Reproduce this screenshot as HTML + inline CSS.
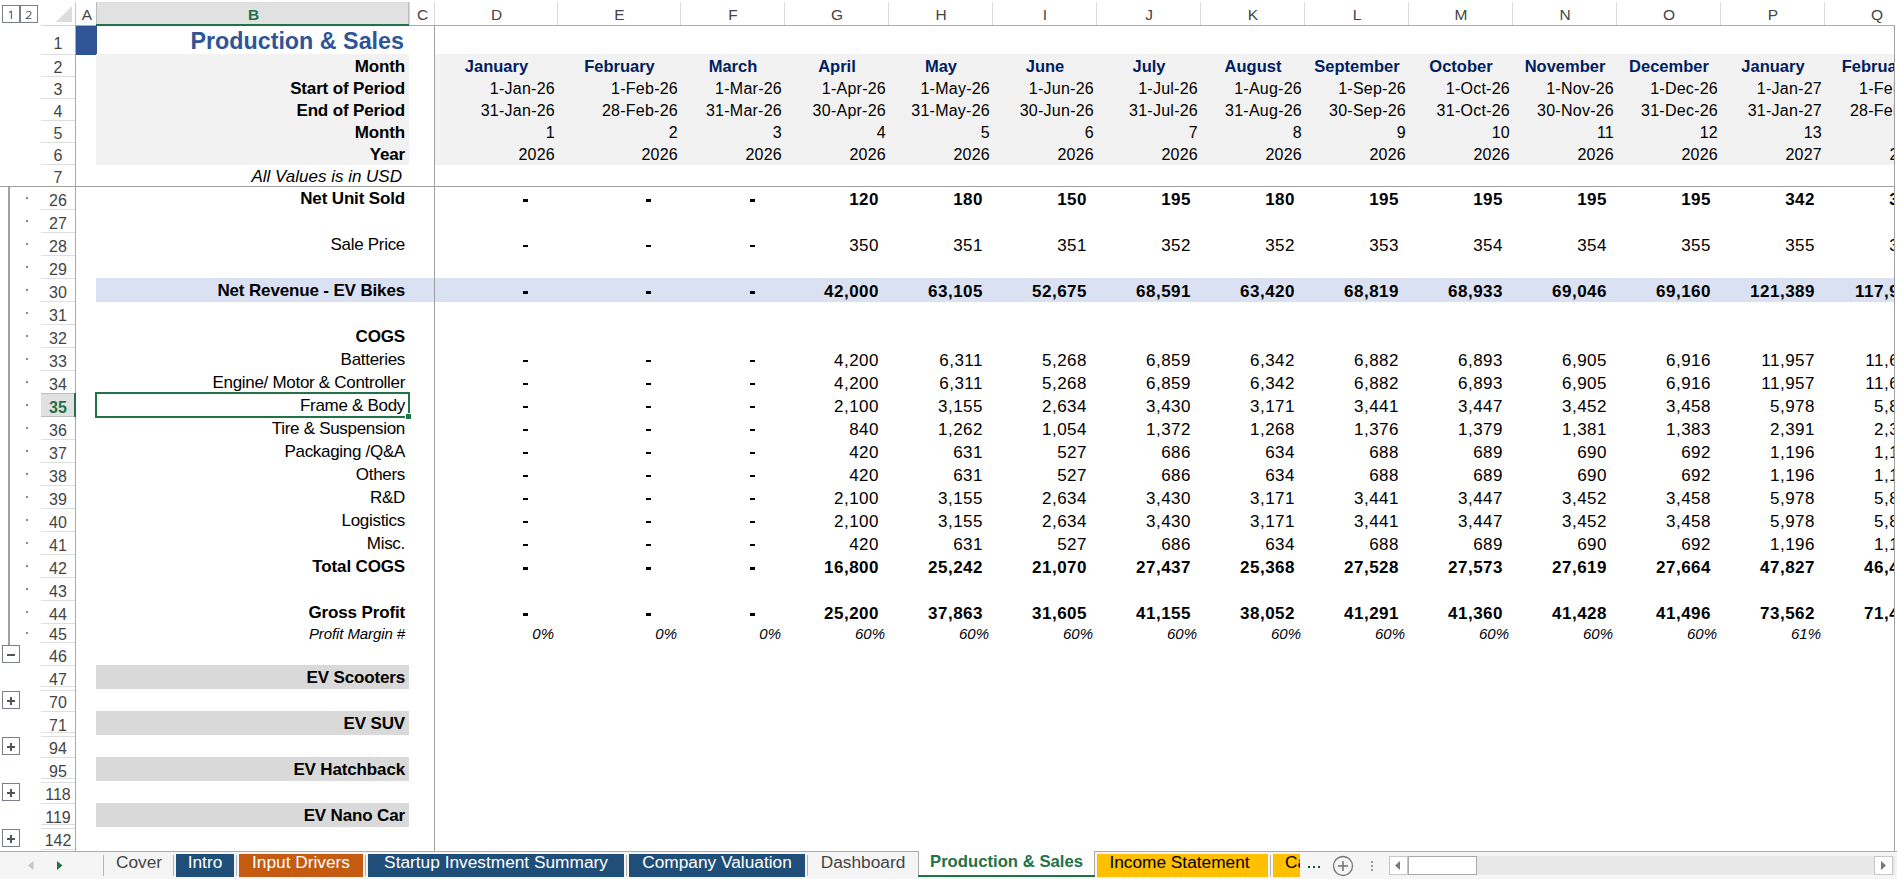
<!DOCTYPE html>
<html><head><meta charset="utf-8"><style>
html,body{margin:0;padding:0;background:#fff;}
body{width:1897px;height:879px;position:relative;overflow:hidden;font-family:"Liberation Sans", sans-serif;}
body div{position:absolute;box-sizing:border-box;}
.t{line-height:30px;height:30px;white-space:nowrap;font-size:17px;color:#000;overflow:visible;}
.b{font-weight:bold;}
.i{font-style:italic;}
.nav{color:#002060;}
.num{letter-spacing:0.5px;}
.lbl{letter-spacing:-0.3px;}
.b.lbl{letter-spacing:-0.15px;}
.fz{font-size:16px;letter-spacing:0.25px;}
.title{font-size:23.3px;font-weight:bold;color:#2f5597;}
.hd{font-size:15.5px;}
.rn{font-size:16px;}
.pm{font-size:15px;font-style:italic;}
.tab{font-size:17.3px;}
.lvl{width:18px;height:18px;border:1px solid #7a7f87;font-size:11px;line-height:16px;text-align:center;color:#444;}
.ob{width:18px;height:18px;border:1px solid #7a7f87;background:#fff;}
</style></head><body>
<div class="lvl" style="left:2px;top:5px;"></div>
<div class="lvl" style="left:20px;top:5px;"></div>
<svg style="position:absolute;left:0;top:0" width="40" height="26"><path d="M9,12.6 L11.4,11.2 L11.4,19" fill="none" stroke="#606060" stroke-width="1.1"/><path d="M26.3,12.6 Q27,11.2 28.7,11.2 Q30.9,11.2 30.9,13.2 Q30.9,14.6 29,16.2 L26.4,18.5 L31.3,18.5" fill="none" stroke="#606060" stroke-width="1.1"/></svg>
<svg style="position:absolute;left:56px;top:6px" width="17" height="17"><polygon points="16,0 16,16 0,16" fill="#dcdcdc"/></svg>
<div style="left:75px;top:2px;width:1px;height:24px;background:#c8c8c8"></div>
<div style="left:96px;top:2px;width:313px;height:23px;background:#e1e1e1;"></div>
<div style="left:96px;top:24px;width:313px;height:2px;background:#217346;"></div>
<div style="left:41px;top:25px;width:34px;height:1px;background:#d4d4d4;"></div>
<div style="left:75px;top:25px;width:21px;height:1px;background:#ababab;"></div>
<div style="left:409px;top:25px;width:1486px;height:1px;background:#ababab;"></div>
<div style="left:409px;top:2px;width:1px;height:23px;background:#dadada;"></div>
<div style="left:434px;top:2px;width:1px;height:23px;background:#dadada;"></div>
<div style="left:557px;top:2px;width:1px;height:23px;background:#dadada;"></div>
<div style="left:680px;top:2px;width:1px;height:23px;background:#dadada;"></div>
<div style="left:784px;top:2px;width:1px;height:23px;background:#dadada;"></div>
<div style="left:888px;top:2px;width:1px;height:23px;background:#dadada;"></div>
<div style="left:992px;top:2px;width:1px;height:23px;background:#dadada;"></div>
<div style="left:1096px;top:2px;width:1px;height:23px;background:#dadada;"></div>
<div style="left:1200px;top:2px;width:1px;height:23px;background:#dadada;"></div>
<div style="left:1304px;top:2px;width:1px;height:23px;background:#dadada;"></div>
<div style="left:1408px;top:2px;width:1px;height:23px;background:#dadada;"></div>
<div style="left:1512px;top:2px;width:1px;height:23px;background:#dadada;"></div>
<div style="left:1616px;top:2px;width:1px;height:23px;background:#dadada;"></div>
<div style="left:1720px;top:2px;width:1px;height:23px;background:#dadada;"></div>
<div style="left:1824px;top:2px;width:1px;height:23px;background:#dadada;"></div>
<div style="left:96px;top:2px;width:1px;height:22px;background:#bdbdbd;"></div>
<div style="left:408px;top:2px;width:1px;height:22px;background:#bdbdbd;"></div>
<div class="t hd" style="left:77px;top:0px;width:20px;text-align:center;color:#444;">A</div>
<div class="t hd" style="left:97px;top:0px;width:313px;text-align:center;color:#217346;font-weight:bold;">B</div>
<div class="t hd" style="left:410px;top:0px;width:25px;text-align:center;color:#444;">C</div>
<div class="t hd" style="left:435px;top:0px;width:123px;text-align:center;color:#444;">D</div>
<div class="t hd" style="left:558px;top:0px;width:123px;text-align:center;color:#444;">E</div>
<div class="t hd" style="left:681px;top:0px;width:104px;text-align:center;color:#444;">F</div>
<div class="t hd" style="left:785px;top:0px;width:104px;text-align:center;color:#444;">G</div>
<div class="t hd" style="left:889px;top:0px;width:104px;text-align:center;color:#444;">H</div>
<div class="t hd" style="left:993px;top:0px;width:104px;text-align:center;color:#444;">I</div>
<div class="t hd" style="left:1097px;top:0px;width:104px;text-align:center;color:#444;">J</div>
<div class="t hd" style="left:1201px;top:0px;width:104px;text-align:center;color:#444;">K</div>
<div class="t hd" style="left:1305px;top:0px;width:104px;text-align:center;color:#444;">L</div>
<div class="t hd" style="left:1409px;top:0px;width:104px;text-align:center;color:#444;">M</div>
<div class="t hd" style="left:1513px;top:0px;width:104px;text-align:center;color:#444;">N</div>
<div class="t hd" style="left:1617px;top:0px;width:104px;text-align:center;color:#444;">O</div>
<div class="t hd" style="left:1721px;top:0px;width:104px;text-align:center;color:#444;">P</div>
<div class="t hd" style="left:1825px;top:0px;width:104px;text-align:center;color:#444;">Q</div>
<div style="left:75px;top:26px;width:1px;height:825px;background:#a8a8a8;"></div>
<div style="left:41px;top:54px;width:34px;height:1px;background:#dedede;"></div>
<div style="left:41px;top:76px;width:34px;height:1px;background:#dedede;"></div>
<div style="left:41px;top:98px;width:34px;height:1px;background:#dedede;"></div>
<div style="left:41px;top:120px;width:34px;height:1px;background:#dedede;"></div>
<div style="left:41px;top:142px;width:34px;height:1px;background:#dedede;"></div>
<div style="left:41px;top:164px;width:34px;height:1px;background:#dedede;"></div>
<div style="left:41px;top:209px;width:34px;height:1px;background:#dedede;"></div>
<div style="left:41px;top:232px;width:34px;height:1px;background:#dedede;"></div>
<div style="left:41px;top:255px;width:34px;height:1px;background:#dedede;"></div>
<div style="left:41px;top:278px;width:34px;height:1px;background:#dedede;"></div>
<div style="left:41px;top:301px;width:34px;height:1px;background:#dedede;"></div>
<div style="left:41px;top:324px;width:34px;height:1px;background:#dedede;"></div>
<div style="left:41px;top:347px;width:34px;height:1px;background:#dedede;"></div>
<div style="left:41px;top:370px;width:34px;height:1px;background:#dedede;"></div>
<div style="left:41px;top:393px;width:34px;height:1px;background:#dedede;"></div>
<div style="left:41px;top:416px;width:34px;height:1px;background:#dedede;"></div>
<div style="left:41px;top:439px;width:34px;height:1px;background:#dedede;"></div>
<div style="left:41px;top:462px;width:34px;height:1px;background:#dedede;"></div>
<div style="left:41px;top:485px;width:34px;height:1px;background:#dedede;"></div>
<div style="left:41px;top:508px;width:34px;height:1px;background:#dedede;"></div>
<div style="left:41px;top:531px;width:34px;height:1px;background:#dedede;"></div>
<div style="left:41px;top:554px;width:34px;height:1px;background:#dedede;"></div>
<div style="left:41px;top:577px;width:34px;height:1px;background:#dedede;"></div>
<div style="left:41px;top:600px;width:34px;height:1px;background:#dedede;"></div>
<div style="left:41px;top:623px;width:34px;height:1px;background:#dedede;"></div>
<div style="left:41px;top:642px;width:34px;height:1px;background:#dedede;"></div>
<div style="left:41px;top:665px;width:34px;height:1px;background:#dedede;"></div>
<div style="left:41px;top:688px;width:34px;height:1px;background:#dedede;"></div>
<div style="left:41px;top:711px;width:34px;height:1px;background:#dedede;"></div>
<div style="left:41px;top:734px;width:34px;height:1px;background:#dedede;"></div>
<div style="left:41px;top:757px;width:34px;height:1px;background:#dedede;"></div>
<div style="left:41px;top:780px;width:34px;height:1px;background:#dedede;"></div>
<div style="left:41px;top:803px;width:34px;height:1px;background:#dedede;"></div>
<div style="left:41px;top:826px;width:34px;height:1px;background:#dedede;"></div>
<div style="left:41px;top:849px;width:34px;height:1px;background:#dedede;"></div>
<div style="left:41px;top:688px;width:34px;height:1px;background:#ffffff;"></div>
<div style="left:41px;top:686px;width:34px;height:1px;background:#dedede;"></div>
<div style="left:41px;top:690px;width:34px;height:1px;background:#dedede;"></div>
<div style="left:41px;top:734px;width:34px;height:1px;background:#ffffff;"></div>
<div style="left:41px;top:732px;width:34px;height:1px;background:#dedede;"></div>
<div style="left:41px;top:736px;width:34px;height:1px;background:#dedede;"></div>
<div style="left:41px;top:780px;width:34px;height:1px;background:#ffffff;"></div>
<div style="left:41px;top:778px;width:34px;height:1px;background:#dedede;"></div>
<div style="left:41px;top:782px;width:34px;height:1px;background:#dedede;"></div>
<div style="left:41px;top:826px;width:34px;height:1px;background:#ffffff;"></div>
<div style="left:41px;top:824px;width:34px;height:1px;background:#dedede;"></div>
<div style="left:41px;top:828px;width:34px;height:1px;background:#dedede;"></div>
<div style="left:41px;top:393px;width:34px;height:24px;background:#e1e1e1;"></div>
<div style="left:41px;top:393px;width:34px;height:1px;background:#bdbdbd;"></div>
<div style="left:41px;top:416px;width:34px;height:1px;background:#bdbdbd;"></div>
<div style="left:74px;top:393px;width:2px;height:24px;background:#217346;"></div>
<div class="t rn" style="left:41px;top:29px;width:34px;text-align:center;color:#444;">1</div>
<div class="t rn" style="left:41px;top:53px;width:34px;text-align:center;color:#444;">2</div>
<div class="t rn" style="left:41px;top:75px;width:34px;text-align:center;color:#444;">3</div>
<div class="t rn" style="left:41px;top:97px;width:34px;text-align:center;color:#444;">4</div>
<div class="t rn" style="left:41px;top:119px;width:34px;text-align:center;color:#444;">5</div>
<div class="t rn" style="left:41px;top:141px;width:34px;text-align:center;color:#444;">6</div>
<div class="t rn" style="left:41px;top:163px;width:34px;text-align:center;color:#444;">7</div>
<div class="t rn" style="left:41px;top:186px;width:34px;text-align:center;color:#444;">26</div>
<div class="t rn" style="left:41px;top:209px;width:34px;text-align:center;color:#444;">27</div>
<div class="t rn" style="left:41px;top:232px;width:34px;text-align:center;color:#444;">28</div>
<div class="t rn" style="left:41px;top:255px;width:34px;text-align:center;color:#444;">29</div>
<div class="t rn" style="left:41px;top:278px;width:34px;text-align:center;color:#444;">30</div>
<div class="t rn" style="left:41px;top:301px;width:34px;text-align:center;color:#444;">31</div>
<div class="t rn" style="left:41px;top:324px;width:34px;text-align:center;color:#444;">32</div>
<div class="t rn" style="left:41px;top:347px;width:34px;text-align:center;color:#444;">33</div>
<div class="t rn" style="left:41px;top:370px;width:34px;text-align:center;color:#444;">34</div>
<div class="t rn" style="left:41px;top:393px;width:34px;text-align:center;color:#217346;font-weight:bold;">35</div>
<div class="t rn" style="left:41px;top:416px;width:34px;text-align:center;color:#444;">36</div>
<div class="t rn" style="left:41px;top:439px;width:34px;text-align:center;color:#444;">37</div>
<div class="t rn" style="left:41px;top:462px;width:34px;text-align:center;color:#444;">38</div>
<div class="t rn" style="left:41px;top:485px;width:34px;text-align:center;color:#444;">39</div>
<div class="t rn" style="left:41px;top:508px;width:34px;text-align:center;color:#444;">40</div>
<div class="t rn" style="left:41px;top:531px;width:34px;text-align:center;color:#444;">41</div>
<div class="t rn" style="left:41px;top:554px;width:34px;text-align:center;color:#444;">42</div>
<div class="t rn" style="left:41px;top:577px;width:34px;text-align:center;color:#444;">43</div>
<div class="t rn" style="left:41px;top:600px;width:34px;text-align:center;color:#444;">44</div>
<div class="t rn" style="left:41px;top:620px;width:34px;text-align:center;color:#444;">45</div>
<div class="t rn" style="left:41px;top:642px;width:34px;text-align:center;color:#444;">46</div>
<div class="t rn" style="left:41px;top:665px;width:34px;text-align:center;color:#444;">47</div>
<div class="t rn" style="left:41px;top:688px;width:34px;text-align:center;color:#444;">70</div>
<div class="t rn" style="left:41px;top:711px;width:34px;text-align:center;color:#444;">71</div>
<div class="t rn" style="left:41px;top:734px;width:34px;text-align:center;color:#444;">94</div>
<div class="t rn" style="left:41px;top:757px;width:34px;text-align:center;color:#444;">95</div>
<div class="t rn" style="left:41px;top:780px;width:34px;text-align:center;color:#444;">118</div>
<div class="t rn" style="left:41px;top:803px;width:34px;text-align:center;color:#444;">119</div>
<div class="t rn" style="left:41px;top:826px;width:34px;text-align:center;color:#444;">142</div>
<div style="left:8px;top:187px;width:2px;height:458px;background:#a0a0a0;"></div>
<div style="left:26px;top:197px;width:2px;height:2px;background:#8a8a8a;"></div>
<div style="left:26px;top:220px;width:2px;height:2px;background:#8a8a8a;"></div>
<div style="left:26px;top:243px;width:2px;height:2px;background:#8a8a8a;"></div>
<div style="left:26px;top:266px;width:2px;height:2px;background:#8a8a8a;"></div>
<div style="left:26px;top:289px;width:2px;height:2px;background:#8a8a8a;"></div>
<div style="left:26px;top:312px;width:2px;height:2px;background:#8a8a8a;"></div>
<div style="left:26px;top:335px;width:2px;height:2px;background:#8a8a8a;"></div>
<div style="left:26px;top:358px;width:2px;height:2px;background:#8a8a8a;"></div>
<div style="left:26px;top:381px;width:2px;height:2px;background:#8a8a8a;"></div>
<div style="left:26px;top:404px;width:2px;height:2px;background:#8a8a8a;"></div>
<div style="left:26px;top:427px;width:2px;height:2px;background:#8a8a8a;"></div>
<div style="left:26px;top:450px;width:2px;height:2px;background:#8a8a8a;"></div>
<div style="left:26px;top:473px;width:2px;height:2px;background:#8a8a8a;"></div>
<div style="left:26px;top:496px;width:2px;height:2px;background:#8a8a8a;"></div>
<div style="left:26px;top:519px;width:2px;height:2px;background:#8a8a8a;"></div>
<div style="left:26px;top:542px;width:2px;height:2px;background:#8a8a8a;"></div>
<div style="left:26px;top:565px;width:2px;height:2px;background:#8a8a8a;"></div>
<div style="left:26px;top:588px;width:2px;height:2px;background:#8a8a8a;"></div>
<div style="left:26px;top:611px;width:2px;height:2px;background:#8a8a8a;"></div>
<div style="left:26px;top:632px;width:2px;height:2px;background:#8a8a8a;"></div>
<div class="ob" style="left:2px;top:645px;"><div style="position:absolute;left:4px;top:8px;width:8px;height:2px;background:#555"></div></div>
<div class="ob" style="left:2px;top:691px;"><div style="position:absolute;left:4px;top:8px;width:8px;height:2px;background:#555"></div><div style="position:absolute;left:7px;top:5px;width:2px;height:8px;background:#555"></div></div>
<div class="ob" style="left:2px;top:737px;"><div style="position:absolute;left:4px;top:8px;width:8px;height:2px;background:#555"></div><div style="position:absolute;left:7px;top:5px;width:2px;height:8px;background:#555"></div></div>
<div class="ob" style="left:2px;top:783px;"><div style="position:absolute;left:4px;top:8px;width:8px;height:2px;background:#555"></div><div style="position:absolute;left:7px;top:5px;width:2px;height:8px;background:#555"></div></div>
<div class="ob" style="left:2px;top:829px;"><div style="position:absolute;left:4px;top:8px;width:8px;height:2px;background:#555"></div><div style="position:absolute;left:7px;top:5px;width:2px;height:8px;background:#555"></div></div>
<div style="left:76px;top:26px;width:21px;height:29px;background:#2f5597;"></div>
<div style="left:96px;top:54px;width:313px;height:111px;background:#f2f2f2;"></div>
<div style="left:435px;top:54px;width:1459px;height:111px;background:#f2f2f2;"></div>
<div class="t title" style="left:96px;top:26px;width:308px;text-align:right;">Production &amp; Sales</div>
<div class="t b lbl" style="left:96px;top:52px;width:309px;text-align:right;">Month</div>
<div class="t b lbl" style="left:96px;top:74px;width:309px;text-align:right;">Start of Period</div>
<div class="t b lbl" style="left:96px;top:96px;width:309px;text-align:right;">End of Period</div>
<div class="t b lbl" style="left:96px;top:118px;width:309px;text-align:right;">Month</div>
<div class="t b lbl" style="left:96px;top:140px;width:309px;text-align:right;">Year</div>
<div class="t i" style="left:96px;top:162px;width:306px;text-align:right;">All Values is in USD</div>
<div style="left:435px;top:0;width:1459px;height:879px;overflow:hidden">
<div class="t b nav" style="left:0px;top:51px;width:123px;text-align:center;font-size:16.5px;">January</div>
<div class="t fz" style="left:-1px;top:74px;width:121px;text-align:right;">1-Jan-26</div>
<div class="t fz" style="left:-1px;top:96px;width:121px;text-align:right;">31-Jan-26</div>
<div class="t fz" style="left:-1px;top:118px;width:121px;text-align:right;">1</div>
<div class="t fz" style="left:-1px;top:140px;width:121px;text-align:right;">2026</div>
<div class="t b nav" style="left:123px;top:51px;width:123px;text-align:center;font-size:16.5px;">February</div>
<div class="t fz" style="left:122px;top:74px;width:121px;text-align:right;">1-Feb-26</div>
<div class="t fz" style="left:122px;top:96px;width:121px;text-align:right;">28-Feb-26</div>
<div class="t fz" style="left:122px;top:118px;width:121px;text-align:right;">2</div>
<div class="t fz" style="left:122px;top:140px;width:121px;text-align:right;">2026</div>
<div class="t b nav" style="left:246px;top:51px;width:104px;text-align:center;font-size:16.5px;">March</div>
<div class="t fz" style="left:245px;top:74px;width:102px;text-align:right;">1-Mar-26</div>
<div class="t fz" style="left:245px;top:96px;width:102px;text-align:right;">31-Mar-26</div>
<div class="t fz" style="left:245px;top:118px;width:102px;text-align:right;">3</div>
<div class="t fz" style="left:245px;top:140px;width:102px;text-align:right;">2026</div>
<div class="t b nav" style="left:350px;top:51px;width:104px;text-align:center;font-size:16.5px;">April</div>
<div class="t fz" style="left:349px;top:74px;width:102px;text-align:right;">1-Apr-26</div>
<div class="t fz" style="left:349px;top:96px;width:102px;text-align:right;">30-Apr-26</div>
<div class="t fz" style="left:349px;top:118px;width:102px;text-align:right;">4</div>
<div class="t fz" style="left:349px;top:140px;width:102px;text-align:right;">2026</div>
<div class="t b nav" style="left:454px;top:51px;width:104px;text-align:center;font-size:16.5px;">May</div>
<div class="t fz" style="left:453px;top:74px;width:102px;text-align:right;">1-May-26</div>
<div class="t fz" style="left:453px;top:96px;width:102px;text-align:right;">31-May-26</div>
<div class="t fz" style="left:453px;top:118px;width:102px;text-align:right;">5</div>
<div class="t fz" style="left:453px;top:140px;width:102px;text-align:right;">2026</div>
<div class="t b nav" style="left:558px;top:51px;width:104px;text-align:center;font-size:16.5px;">June</div>
<div class="t fz" style="left:557px;top:74px;width:102px;text-align:right;">1-Jun-26</div>
<div class="t fz" style="left:557px;top:96px;width:102px;text-align:right;">30-Jun-26</div>
<div class="t fz" style="left:557px;top:118px;width:102px;text-align:right;">6</div>
<div class="t fz" style="left:557px;top:140px;width:102px;text-align:right;">2026</div>
<div class="t b nav" style="left:662px;top:51px;width:104px;text-align:center;font-size:16.5px;">July</div>
<div class="t fz" style="left:661px;top:74px;width:102px;text-align:right;">1-Jul-26</div>
<div class="t fz" style="left:661px;top:96px;width:102px;text-align:right;">31-Jul-26</div>
<div class="t fz" style="left:661px;top:118px;width:102px;text-align:right;">7</div>
<div class="t fz" style="left:661px;top:140px;width:102px;text-align:right;">2026</div>
<div class="t b nav" style="left:766px;top:51px;width:104px;text-align:center;font-size:16.5px;">August</div>
<div class="t fz" style="left:765px;top:74px;width:102px;text-align:right;">1-Aug-26</div>
<div class="t fz" style="left:765px;top:96px;width:102px;text-align:right;">31-Aug-26</div>
<div class="t fz" style="left:765px;top:118px;width:102px;text-align:right;">8</div>
<div class="t fz" style="left:765px;top:140px;width:102px;text-align:right;">2026</div>
<div class="t b nav" style="left:870px;top:51px;width:104px;text-align:center;font-size:16.5px;">September</div>
<div class="t fz" style="left:869px;top:74px;width:102px;text-align:right;">1-Sep-26</div>
<div class="t fz" style="left:869px;top:96px;width:102px;text-align:right;">30-Sep-26</div>
<div class="t fz" style="left:869px;top:118px;width:102px;text-align:right;">9</div>
<div class="t fz" style="left:869px;top:140px;width:102px;text-align:right;">2026</div>
<div class="t b nav" style="left:974px;top:51px;width:104px;text-align:center;font-size:16.5px;">October</div>
<div class="t fz" style="left:973px;top:74px;width:102px;text-align:right;">1-Oct-26</div>
<div class="t fz" style="left:973px;top:96px;width:102px;text-align:right;">31-Oct-26</div>
<div class="t fz" style="left:973px;top:118px;width:102px;text-align:right;">10</div>
<div class="t fz" style="left:973px;top:140px;width:102px;text-align:right;">2026</div>
<div class="t b nav" style="left:1078px;top:51px;width:104px;text-align:center;font-size:16.5px;">November</div>
<div class="t fz" style="left:1077px;top:74px;width:102px;text-align:right;">1-Nov-26</div>
<div class="t fz" style="left:1077px;top:96px;width:102px;text-align:right;">30-Nov-26</div>
<div class="t fz" style="left:1077px;top:118px;width:102px;text-align:right;">11</div>
<div class="t fz" style="left:1077px;top:140px;width:102px;text-align:right;">2026</div>
<div class="t b nav" style="left:1182px;top:51px;width:104px;text-align:center;font-size:16.5px;">December</div>
<div class="t fz" style="left:1181px;top:74px;width:102px;text-align:right;">1-Dec-26</div>
<div class="t fz" style="left:1181px;top:96px;width:102px;text-align:right;">31-Dec-26</div>
<div class="t fz" style="left:1181px;top:118px;width:102px;text-align:right;">12</div>
<div class="t fz" style="left:1181px;top:140px;width:102px;text-align:right;">2026</div>
<div class="t b nav" style="left:1286px;top:51px;width:104px;text-align:center;font-size:16.5px;">January</div>
<div class="t fz" style="left:1285px;top:74px;width:102px;text-align:right;">1-Jan-27</div>
<div class="t fz" style="left:1285px;top:96px;width:102px;text-align:right;">31-Jan-27</div>
<div class="t fz" style="left:1285px;top:118px;width:102px;text-align:right;">13</div>
<div class="t fz" style="left:1285px;top:140px;width:102px;text-align:right;">2027</div>
<div class="t b nav" style="left:1390px;top:51px;width:104px;text-align:center;font-size:16.5px;">February</div>
<div class="t fz" style="left:1389px;top:74px;width:102px;text-align:right;">1-Feb-27</div>
<div class="t fz" style="left:1389px;top:96px;width:102px;text-align:right;">28-Feb-27</div>
<div class="t fz" style="left:1389px;top:118px;width:102px;text-align:right;">14</div>
<div class="t fz" style="left:1389px;top:140px;width:102px;text-align:right;">2027</div>
</div>
<div style="left:96px;top:278px;width:1798px;height:24px;background:#d9e1f2;"></div>
<div style="left:96px;top:665px;width:313px;height:24px;background:#d9d9d9;"></div>
<div style="left:96px;top:711px;width:313px;height:24px;background:#d9d9d9;"></div>
<div style="left:96px;top:757px;width:313px;height:24px;background:#d9d9d9;"></div>
<div style="left:96px;top:803px;width:313px;height:24px;background:#d9d9d9;"></div>
<div class="t b lbl" style="left:96px;top:184px;width:309px;text-align:right;">Net Unit Sold</div>
<div class="t  lbl" style="left:96px;top:230px;width:309px;text-align:right;">Sale Price</div>
<div class="t b lbl" style="left:96px;top:276px;width:309px;text-align:right;">Net Revenue - EV Bikes</div>
<div class="t b lbl" style="left:96px;top:322px;width:309px;text-align:right;">COGS</div>
<div class="t  lbl" style="left:96px;top:345px;width:309px;text-align:right;">Batteries</div>
<div class="t  lbl" style="left:96px;top:368px;width:309px;text-align:right;">Engine/ Motor &amp; Controller</div>
<div class="t  lbl" style="left:96px;top:391px;width:309px;text-align:right;">Frame &amp; Body</div>
<div class="t  lbl" style="left:96px;top:414px;width:309px;text-align:right;">Tire &amp; Suspension</div>
<div class="t  lbl" style="left:96px;top:437px;width:309px;text-align:right;">Packaging /Q&amp;A</div>
<div class="t  lbl" style="left:96px;top:460px;width:309px;text-align:right;">Others</div>
<div class="t  lbl" style="left:96px;top:483px;width:309px;text-align:right;">R&amp;D</div>
<div class="t  lbl" style="left:96px;top:506px;width:309px;text-align:right;">Logistics</div>
<div class="t  lbl" style="left:96px;top:529px;width:309px;text-align:right;">Misc.</div>
<div class="t b lbl" style="left:96px;top:552px;width:309px;text-align:right;">Total COGS</div>
<div class="t b lbl" style="left:96px;top:598px;width:309px;text-align:right;">Gross Profit</div>
<div class="t b lbl" style="left:96px;top:663px;width:309px;text-align:right;">EV Scooters</div>
<div class="t b lbl" style="left:96px;top:709px;width:309px;text-align:right;">EV SUV</div>
<div class="t b lbl" style="left:96px;top:755px;width:309px;text-align:right;">EV Hatchback</div>
<div class="t b lbl" style="left:96px;top:801px;width:309px;text-align:right;">EV Nano Car</div>
<div class="t pm" style="left:96px;top:619px;width:309px;text-align:right;letter-spacing:-0.1px;">Profit Margin #</div>
<div style="left:435px;top:0;width:1459px;height:879px;overflow:hidden">
<div style="left:88px;top:199px;width:5px;height:3px;background:#000;"></div>
<div style="left:211px;top:199px;width:5px;height:3px;background:#000;"></div>
<div style="left:315px;top:199px;width:5px;height:3px;background:#000;"></div>
<div class="t b num" style="left:349px;top:185px;width:95px;text-align:right;">120</div>
<div class="t b num" style="left:453px;top:185px;width:95px;text-align:right;">180</div>
<div class="t b num" style="left:557px;top:185px;width:95px;text-align:right;">150</div>
<div class="t b num" style="left:661px;top:185px;width:95px;text-align:right;">195</div>
<div class="t b num" style="left:765px;top:185px;width:95px;text-align:right;">180</div>
<div class="t b num" style="left:869px;top:185px;width:95px;text-align:right;">195</div>
<div class="t b num" style="left:973px;top:185px;width:95px;text-align:right;">195</div>
<div class="t b num" style="left:1077px;top:185px;width:95px;text-align:right;">195</div>
<div class="t b num" style="left:1181px;top:185px;width:95px;text-align:right;">195</div>
<div class="t b num" style="left:1285px;top:185px;width:95px;text-align:right;">342</div>
<div class="t b num" style="left:1389px;top:185px;width:95px;text-align:right;">348</div>
<div style="left:88px;top:245px;width:5px;height:2px;background:#000;"></div>
<div style="left:211px;top:245px;width:5px;height:2px;background:#000;"></div>
<div style="left:315px;top:245px;width:5px;height:2px;background:#000;"></div>
<div class="t  num" style="left:349px;top:231px;width:95px;text-align:right;">350</div>
<div class="t  num" style="left:453px;top:231px;width:95px;text-align:right;">351</div>
<div class="t  num" style="left:557px;top:231px;width:95px;text-align:right;">351</div>
<div class="t  num" style="left:661px;top:231px;width:95px;text-align:right;">352</div>
<div class="t  num" style="left:765px;top:231px;width:95px;text-align:right;">352</div>
<div class="t  num" style="left:869px;top:231px;width:95px;text-align:right;">353</div>
<div class="t  num" style="left:973px;top:231px;width:95px;text-align:right;">354</div>
<div class="t  num" style="left:1077px;top:231px;width:95px;text-align:right;">354</div>
<div class="t  num" style="left:1181px;top:231px;width:95px;text-align:right;">355</div>
<div class="t  num" style="left:1285px;top:231px;width:95px;text-align:right;">355</div>
<div class="t  num" style="left:1389px;top:231px;width:95px;text-align:right;">356</div>
<div style="left:88px;top:291px;width:5px;height:3px;background:#000;"></div>
<div style="left:211px;top:291px;width:5px;height:3px;background:#000;"></div>
<div style="left:315px;top:291px;width:5px;height:3px;background:#000;"></div>
<div class="t b num" style="left:349px;top:277px;width:95px;text-align:right;">42,000</div>
<div class="t b num" style="left:453px;top:277px;width:95px;text-align:right;">63,105</div>
<div class="t b num" style="left:557px;top:277px;width:95px;text-align:right;">52,675</div>
<div class="t b num" style="left:661px;top:277px;width:95px;text-align:right;">68,591</div>
<div class="t b num" style="left:765px;top:277px;width:95px;text-align:right;">63,420</div>
<div class="t b num" style="left:869px;top:277px;width:95px;text-align:right;">68,819</div>
<div class="t b num" style="left:973px;top:277px;width:95px;text-align:right;">68,933</div>
<div class="t b num" style="left:1077px;top:277px;width:95px;text-align:right;">69,046</div>
<div class="t b num" style="left:1181px;top:277px;width:95px;text-align:right;">69,160</div>
<div class="t b num" style="left:1285px;top:277px;width:95px;text-align:right;">121,389</div>
<div class="t b num" style="left:1389px;top:277px;width:95px;text-align:right;">117,988</div>
<div style="left:88px;top:360px;width:5px;height:2px;background:#000;"></div>
<div style="left:211px;top:360px;width:5px;height:2px;background:#000;"></div>
<div style="left:315px;top:360px;width:5px;height:2px;background:#000;"></div>
<div class="t  num" style="left:349px;top:346px;width:95px;text-align:right;">4,200</div>
<div class="t  num" style="left:453px;top:346px;width:95px;text-align:right;">6,311</div>
<div class="t  num" style="left:557px;top:346px;width:95px;text-align:right;">5,268</div>
<div class="t  num" style="left:661px;top:346px;width:95px;text-align:right;">6,859</div>
<div class="t  num" style="left:765px;top:346px;width:95px;text-align:right;">6,342</div>
<div class="t  num" style="left:869px;top:346px;width:95px;text-align:right;">6,882</div>
<div class="t  num" style="left:973px;top:346px;width:95px;text-align:right;">6,893</div>
<div class="t  num" style="left:1077px;top:346px;width:95px;text-align:right;">6,905</div>
<div class="t  num" style="left:1181px;top:346px;width:95px;text-align:right;">6,916</div>
<div class="t  num" style="left:1285px;top:346px;width:95px;text-align:right;">11,957</div>
<div class="t  num" style="left:1389px;top:346px;width:95px;text-align:right;">11,640</div>
<div style="left:88px;top:383px;width:5px;height:2px;background:#000;"></div>
<div style="left:211px;top:383px;width:5px;height:2px;background:#000;"></div>
<div style="left:315px;top:383px;width:5px;height:2px;background:#000;"></div>
<div class="t  num" style="left:349px;top:369px;width:95px;text-align:right;">4,200</div>
<div class="t  num" style="left:453px;top:369px;width:95px;text-align:right;">6,311</div>
<div class="t  num" style="left:557px;top:369px;width:95px;text-align:right;">5,268</div>
<div class="t  num" style="left:661px;top:369px;width:95px;text-align:right;">6,859</div>
<div class="t  num" style="left:765px;top:369px;width:95px;text-align:right;">6,342</div>
<div class="t  num" style="left:869px;top:369px;width:95px;text-align:right;">6,882</div>
<div class="t  num" style="left:973px;top:369px;width:95px;text-align:right;">6,893</div>
<div class="t  num" style="left:1077px;top:369px;width:95px;text-align:right;">6,905</div>
<div class="t  num" style="left:1181px;top:369px;width:95px;text-align:right;">6,916</div>
<div class="t  num" style="left:1285px;top:369px;width:95px;text-align:right;">11,957</div>
<div class="t  num" style="left:1389px;top:369px;width:95px;text-align:right;">11,640</div>
<div style="left:88px;top:406px;width:5px;height:2px;background:#000;"></div>
<div style="left:211px;top:406px;width:5px;height:2px;background:#000;"></div>
<div style="left:315px;top:406px;width:5px;height:2px;background:#000;"></div>
<div class="t  num" style="left:349px;top:392px;width:95px;text-align:right;">2,100</div>
<div class="t  num" style="left:453px;top:392px;width:95px;text-align:right;">3,155</div>
<div class="t  num" style="left:557px;top:392px;width:95px;text-align:right;">2,634</div>
<div class="t  num" style="left:661px;top:392px;width:95px;text-align:right;">3,430</div>
<div class="t  num" style="left:765px;top:392px;width:95px;text-align:right;">3,171</div>
<div class="t  num" style="left:869px;top:392px;width:95px;text-align:right;">3,441</div>
<div class="t  num" style="left:973px;top:392px;width:95px;text-align:right;">3,447</div>
<div class="t  num" style="left:1077px;top:392px;width:95px;text-align:right;">3,452</div>
<div class="t  num" style="left:1181px;top:392px;width:95px;text-align:right;">3,458</div>
<div class="t  num" style="left:1285px;top:392px;width:95px;text-align:right;">5,978</div>
<div class="t  num" style="left:1389px;top:392px;width:95px;text-align:right;">5,820</div>
<div style="left:88px;top:429px;width:5px;height:2px;background:#000;"></div>
<div style="left:211px;top:429px;width:5px;height:2px;background:#000;"></div>
<div style="left:315px;top:429px;width:5px;height:2px;background:#000;"></div>
<div class="t  num" style="left:349px;top:415px;width:95px;text-align:right;">840</div>
<div class="t  num" style="left:453px;top:415px;width:95px;text-align:right;">1,262</div>
<div class="t  num" style="left:557px;top:415px;width:95px;text-align:right;">1,054</div>
<div class="t  num" style="left:661px;top:415px;width:95px;text-align:right;">1,372</div>
<div class="t  num" style="left:765px;top:415px;width:95px;text-align:right;">1,268</div>
<div class="t  num" style="left:869px;top:415px;width:95px;text-align:right;">1,376</div>
<div class="t  num" style="left:973px;top:415px;width:95px;text-align:right;">1,379</div>
<div class="t  num" style="left:1077px;top:415px;width:95px;text-align:right;">1,381</div>
<div class="t  num" style="left:1181px;top:415px;width:95px;text-align:right;">1,383</div>
<div class="t  num" style="left:1285px;top:415px;width:95px;text-align:right;">2,391</div>
<div class="t  num" style="left:1389px;top:415px;width:95px;text-align:right;">2,328</div>
<div style="left:88px;top:452px;width:5px;height:2px;background:#000;"></div>
<div style="left:211px;top:452px;width:5px;height:2px;background:#000;"></div>
<div style="left:315px;top:452px;width:5px;height:2px;background:#000;"></div>
<div class="t  num" style="left:349px;top:438px;width:95px;text-align:right;">420</div>
<div class="t  num" style="left:453px;top:438px;width:95px;text-align:right;">631</div>
<div class="t  num" style="left:557px;top:438px;width:95px;text-align:right;">527</div>
<div class="t  num" style="left:661px;top:438px;width:95px;text-align:right;">686</div>
<div class="t  num" style="left:765px;top:438px;width:95px;text-align:right;">634</div>
<div class="t  num" style="left:869px;top:438px;width:95px;text-align:right;">688</div>
<div class="t  num" style="left:973px;top:438px;width:95px;text-align:right;">689</div>
<div class="t  num" style="left:1077px;top:438px;width:95px;text-align:right;">690</div>
<div class="t  num" style="left:1181px;top:438px;width:95px;text-align:right;">692</div>
<div class="t  num" style="left:1285px;top:438px;width:95px;text-align:right;">1,196</div>
<div class="t  num" style="left:1389px;top:438px;width:95px;text-align:right;">1,164</div>
<div style="left:88px;top:475px;width:5px;height:2px;background:#000;"></div>
<div style="left:211px;top:475px;width:5px;height:2px;background:#000;"></div>
<div style="left:315px;top:475px;width:5px;height:2px;background:#000;"></div>
<div class="t  num" style="left:349px;top:461px;width:95px;text-align:right;">420</div>
<div class="t  num" style="left:453px;top:461px;width:95px;text-align:right;">631</div>
<div class="t  num" style="left:557px;top:461px;width:95px;text-align:right;">527</div>
<div class="t  num" style="left:661px;top:461px;width:95px;text-align:right;">686</div>
<div class="t  num" style="left:765px;top:461px;width:95px;text-align:right;">634</div>
<div class="t  num" style="left:869px;top:461px;width:95px;text-align:right;">688</div>
<div class="t  num" style="left:973px;top:461px;width:95px;text-align:right;">689</div>
<div class="t  num" style="left:1077px;top:461px;width:95px;text-align:right;">690</div>
<div class="t  num" style="left:1181px;top:461px;width:95px;text-align:right;">692</div>
<div class="t  num" style="left:1285px;top:461px;width:95px;text-align:right;">1,196</div>
<div class="t  num" style="left:1389px;top:461px;width:95px;text-align:right;">1,164</div>
<div style="left:88px;top:498px;width:5px;height:2px;background:#000;"></div>
<div style="left:211px;top:498px;width:5px;height:2px;background:#000;"></div>
<div style="left:315px;top:498px;width:5px;height:2px;background:#000;"></div>
<div class="t  num" style="left:349px;top:484px;width:95px;text-align:right;">2,100</div>
<div class="t  num" style="left:453px;top:484px;width:95px;text-align:right;">3,155</div>
<div class="t  num" style="left:557px;top:484px;width:95px;text-align:right;">2,634</div>
<div class="t  num" style="left:661px;top:484px;width:95px;text-align:right;">3,430</div>
<div class="t  num" style="left:765px;top:484px;width:95px;text-align:right;">3,171</div>
<div class="t  num" style="left:869px;top:484px;width:95px;text-align:right;">3,441</div>
<div class="t  num" style="left:973px;top:484px;width:95px;text-align:right;">3,447</div>
<div class="t  num" style="left:1077px;top:484px;width:95px;text-align:right;">3,452</div>
<div class="t  num" style="left:1181px;top:484px;width:95px;text-align:right;">3,458</div>
<div class="t  num" style="left:1285px;top:484px;width:95px;text-align:right;">5,978</div>
<div class="t  num" style="left:1389px;top:484px;width:95px;text-align:right;">5,820</div>
<div style="left:88px;top:521px;width:5px;height:2px;background:#000;"></div>
<div style="left:211px;top:521px;width:5px;height:2px;background:#000;"></div>
<div style="left:315px;top:521px;width:5px;height:2px;background:#000;"></div>
<div class="t  num" style="left:349px;top:507px;width:95px;text-align:right;">2,100</div>
<div class="t  num" style="left:453px;top:507px;width:95px;text-align:right;">3,155</div>
<div class="t  num" style="left:557px;top:507px;width:95px;text-align:right;">2,634</div>
<div class="t  num" style="left:661px;top:507px;width:95px;text-align:right;">3,430</div>
<div class="t  num" style="left:765px;top:507px;width:95px;text-align:right;">3,171</div>
<div class="t  num" style="left:869px;top:507px;width:95px;text-align:right;">3,441</div>
<div class="t  num" style="left:973px;top:507px;width:95px;text-align:right;">3,447</div>
<div class="t  num" style="left:1077px;top:507px;width:95px;text-align:right;">3,452</div>
<div class="t  num" style="left:1181px;top:507px;width:95px;text-align:right;">3,458</div>
<div class="t  num" style="left:1285px;top:507px;width:95px;text-align:right;">5,978</div>
<div class="t  num" style="left:1389px;top:507px;width:95px;text-align:right;">5,820</div>
<div style="left:88px;top:544px;width:5px;height:2px;background:#000;"></div>
<div style="left:211px;top:544px;width:5px;height:2px;background:#000;"></div>
<div style="left:315px;top:544px;width:5px;height:2px;background:#000;"></div>
<div class="t  num" style="left:349px;top:530px;width:95px;text-align:right;">420</div>
<div class="t  num" style="left:453px;top:530px;width:95px;text-align:right;">631</div>
<div class="t  num" style="left:557px;top:530px;width:95px;text-align:right;">527</div>
<div class="t  num" style="left:661px;top:530px;width:95px;text-align:right;">686</div>
<div class="t  num" style="left:765px;top:530px;width:95px;text-align:right;">634</div>
<div class="t  num" style="left:869px;top:530px;width:95px;text-align:right;">688</div>
<div class="t  num" style="left:973px;top:530px;width:95px;text-align:right;">689</div>
<div class="t  num" style="left:1077px;top:530px;width:95px;text-align:right;">690</div>
<div class="t  num" style="left:1181px;top:530px;width:95px;text-align:right;">692</div>
<div class="t  num" style="left:1285px;top:530px;width:95px;text-align:right;">1,196</div>
<div class="t  num" style="left:1389px;top:530px;width:95px;text-align:right;">1,164</div>
<div style="left:88px;top:567px;width:5px;height:3px;background:#000;"></div>
<div style="left:211px;top:567px;width:5px;height:3px;background:#000;"></div>
<div style="left:315px;top:567px;width:5px;height:3px;background:#000;"></div>
<div class="t b num" style="left:349px;top:553px;width:95px;text-align:right;">16,800</div>
<div class="t b num" style="left:453px;top:553px;width:95px;text-align:right;">25,242</div>
<div class="t b num" style="left:557px;top:553px;width:95px;text-align:right;">21,070</div>
<div class="t b num" style="left:661px;top:553px;width:95px;text-align:right;">27,437</div>
<div class="t b num" style="left:765px;top:553px;width:95px;text-align:right;">25,368</div>
<div class="t b num" style="left:869px;top:553px;width:95px;text-align:right;">27,528</div>
<div class="t b num" style="left:973px;top:553px;width:95px;text-align:right;">27,573</div>
<div class="t b num" style="left:1077px;top:553px;width:95px;text-align:right;">27,619</div>
<div class="t b num" style="left:1181px;top:553px;width:95px;text-align:right;">27,664</div>
<div class="t b num" style="left:1285px;top:553px;width:95px;text-align:right;">47,827</div>
<div class="t b num" style="left:1389px;top:553px;width:95px;text-align:right;">46,412</div>
<div style="left:88px;top:613px;width:5px;height:3px;background:#000;"></div>
<div style="left:211px;top:613px;width:5px;height:3px;background:#000;"></div>
<div style="left:315px;top:613px;width:5px;height:3px;background:#000;"></div>
<div class="t b num" style="left:349px;top:599px;width:95px;text-align:right;">25,200</div>
<div class="t b num" style="left:453px;top:599px;width:95px;text-align:right;">37,863</div>
<div class="t b num" style="left:557px;top:599px;width:95px;text-align:right;">31,605</div>
<div class="t b num" style="left:661px;top:599px;width:95px;text-align:right;">41,155</div>
<div class="t b num" style="left:765px;top:599px;width:95px;text-align:right;">38,052</div>
<div class="t b num" style="left:869px;top:599px;width:95px;text-align:right;">41,291</div>
<div class="t b num" style="left:973px;top:599px;width:95px;text-align:right;">41,360</div>
<div class="t b num" style="left:1077px;top:599px;width:95px;text-align:right;">41,428</div>
<div class="t b num" style="left:1181px;top:599px;width:95px;text-align:right;">41,496</div>
<div class="t b num" style="left:1285px;top:599px;width:95px;text-align:right;">73,562</div>
<div class="t b num" style="left:1389px;top:599px;width:95px;text-align:right;">71,428</div>
<div class="t pm" style="left:-1px;top:619px;width:120px;text-align:right;">0%</div>
<div class="t pm" style="left:122px;top:619px;width:120px;text-align:right;">0%</div>
<div class="t pm" style="left:245px;top:619px;width:101px;text-align:right;">0%</div>
<div class="t pm" style="left:349px;top:619px;width:101px;text-align:right;">60%</div>
<div class="t pm" style="left:453px;top:619px;width:101px;text-align:right;">60%</div>
<div class="t pm" style="left:557px;top:619px;width:101px;text-align:right;">60%</div>
<div class="t pm" style="left:661px;top:619px;width:101px;text-align:right;">60%</div>
<div class="t pm" style="left:765px;top:619px;width:101px;text-align:right;">60%</div>
<div class="t pm" style="left:869px;top:619px;width:101px;text-align:right;">60%</div>
<div class="t pm" style="left:973px;top:619px;width:101px;text-align:right;">60%</div>
<div class="t pm" style="left:1077px;top:619px;width:101px;text-align:right;">60%</div>
<div class="t pm" style="left:1181px;top:619px;width:101px;text-align:right;">60%</div>
<div class="t pm" style="left:1285px;top:619px;width:101px;text-align:right;">61%</div>
<div class="t pm" style="left:1389px;top:619px;width:101px;text-align:right;">61%</div>
</div>
<div style="left:95px;top:392px;width:311px;height:22px;border:2px solid #217346;box-sizing:content-box;width:311px"></div>
<div style="left:405px;top:413px;width:7px;height:7px;background:#ffffff;"></div>
<div style="left:406px;top:414px;width:5px;height:5px;background:#217346;"></div>
<div style="left:0px;top:186px;width:1894px;height:1px;background:#a0a0a0;"></div>
<div style="left:434px;top:26px;width:1px;height:825px;background:#a0a0a0;"></div>
<div style="left:1894px;top:25px;width:1px;height:826px;background:#a0a0a0;"></div>
<div style="left:0px;top:851px;width:1897px;height:28px;background:#f5f5f5;"></div>
<div style="left:0px;top:851px;width:1897px;height:1px;background:#ababab;"></div>
<svg style="position:absolute;left:26px;top:860px" width="10" height="12"><polygon points="7.5,1 7.5,10 2,5.5" fill="#c6c6c6"/></svg>
<svg style="position:absolute;left:55px;top:860px" width="10" height="12"><polygon points="2,1 2,10 7.5,5.5" fill="#217346"/></svg>
<div style="left:103px;top:855px;width:1px;height:21px;background:#b4b4b4;"></div>
<div class="t tab" style="left:104px;top:847px;width:70px;text-align:center;color:#444;">Cover</div>
<div style="left:173px;top:855px;width:1px;height:21px;background:#b4b4b4;"></div>
<div style="left:176px;top:854px;width:58px;height:23px;background:#1f4e79;"></div>
<div class="t tab" style="left:176px;top:847px;width:58px;text-align:center;color:#fff;">Intro</div>
<div style="left:236px;top:855px;width:1px;height:21px;background:#b4b4b4;"></div>
<div style="left:239px;top:854px;width:124px;height:23px;background:#c55a11;"></div>
<div class="t tab" style="left:239px;top:847px;width:124px;text-align:center;color:#fff;">Input Drivers</div>
<div style="left:365px;top:855px;width:1px;height:21px;background:#b4b4b4;"></div>
<div style="left:368px;top:854px;width:256px;height:23px;background:#1f4e79;"></div>
<div class="t tab" style="left:368px;top:847px;width:256px;text-align:center;color:#fff;">Startup Investment Summary</div>
<div style="left:626px;top:855px;width:1px;height:21px;background:#b4b4b4;"></div>
<div style="left:629px;top:854px;width:176px;height:23px;background:#1f4e79;"></div>
<div class="t tab" style="left:629px;top:847px;width:176px;text-align:center;color:#fff;">Company Valuation</div>
<div style="left:807px;top:855px;width:1px;height:21px;background:#b4b4b4;"></div>
<div class="t tab" style="left:808px;top:847px;width:110px;text-align:center;color:#444;">Dashboard</div>
<div style="left:918px;top:851px;width:177px;height:26px;background:#ffffff;"></div>
<div style="left:918px;top:851px;width:1px;height:26px;background:#ababab;"></div>
<div style="left:1094px;top:851px;width:1px;height:26px;background:#ababab;"></div>
<div style="left:918px;top:875px;width:177px;height:2px;background:#217346;"></div>
<div class="t tab" style="left:918px;top:847px;width:177px;text-align:center;color:#217346;font-weight:bold;font-size:16.7px;">Production &amp; Sales</div>
<div style="left:1097px;top:854px;width:171px;height:23px;background:#ffc000;"></div>
<div class="t tab" style="left:1094px;top:847px;width:171px;text-align:center;color:#000;">Income Statement</div>
<div style="left:1270px;top:855px;width:1px;height:21px;background:#b4b4b4;"></div>
<div style="left:1273px;top:854px;width:27px;height:23px;background:#ffc000;"></div>
<div style="left:1273px;top:847px;width:27px;height:30px;overflow:hidden"><div class="t tab" style="left:12px;top:0;color:#000">Cash</div></div>
<div style="left:1308px;top:866px;width:2px;height:2px;background:#10592d;"></div>
<div style="left:1313px;top:866px;width:2px;height:2px;background:#10592d;"></div>
<div style="left:1318px;top:866px;width:2px;height:2px;background:#10592d;"></div>
<svg style="position:absolute;left:1332px;top:855px" width="22" height="22"><circle cx="11" cy="11" r="9.5" fill="none" stroke="#777" stroke-width="1.3"/><rect x="6" y="10.2" width="10" height="1.6" fill="#777"/><rect x="10.2" y="6" width="1.6" height="10" fill="#777"/></svg>
<div style="left:1371px;top:861px;width:2px;height:2px;background:#9a9a9a;"></div>
<div style="left:1371px;top:865px;width:2px;height:2px;background:#9a9a9a;"></div>
<div style="left:1371px;top:869px;width:2px;height:2px;background:#9a9a9a;"></div>
<div style="left:1389px;top:856px;width:506px;height:19px;background:#e8e8e8;"></div>
<div style="left:1389px;top:856px;width:19px;height:19px;background:#ffffff;box-sizing:border-box;border:1px solid #c6c6c6;"></div>
<svg style="position:absolute;left:1393px;top:860px" width="10" height="12"><polygon points="7,1 7,10 2,5.5" fill="#777"/></svg>
<div style="left:1408px;top:856px;width:69px;height:19px;background:#ffffff;box-sizing:border-box;border:1px solid #a8a8a8;"></div>
<div style="left:1874px;top:856px;width:19px;height:19px;background:#ffffff;box-sizing:border-box;border:1px solid #c6c6c6;"></div>
<svg style="position:absolute;left:1879px;top:860px" width="10" height="12"><polygon points="2,1 2,10 7,5.5" fill="#777"/></svg>
</body></html>
